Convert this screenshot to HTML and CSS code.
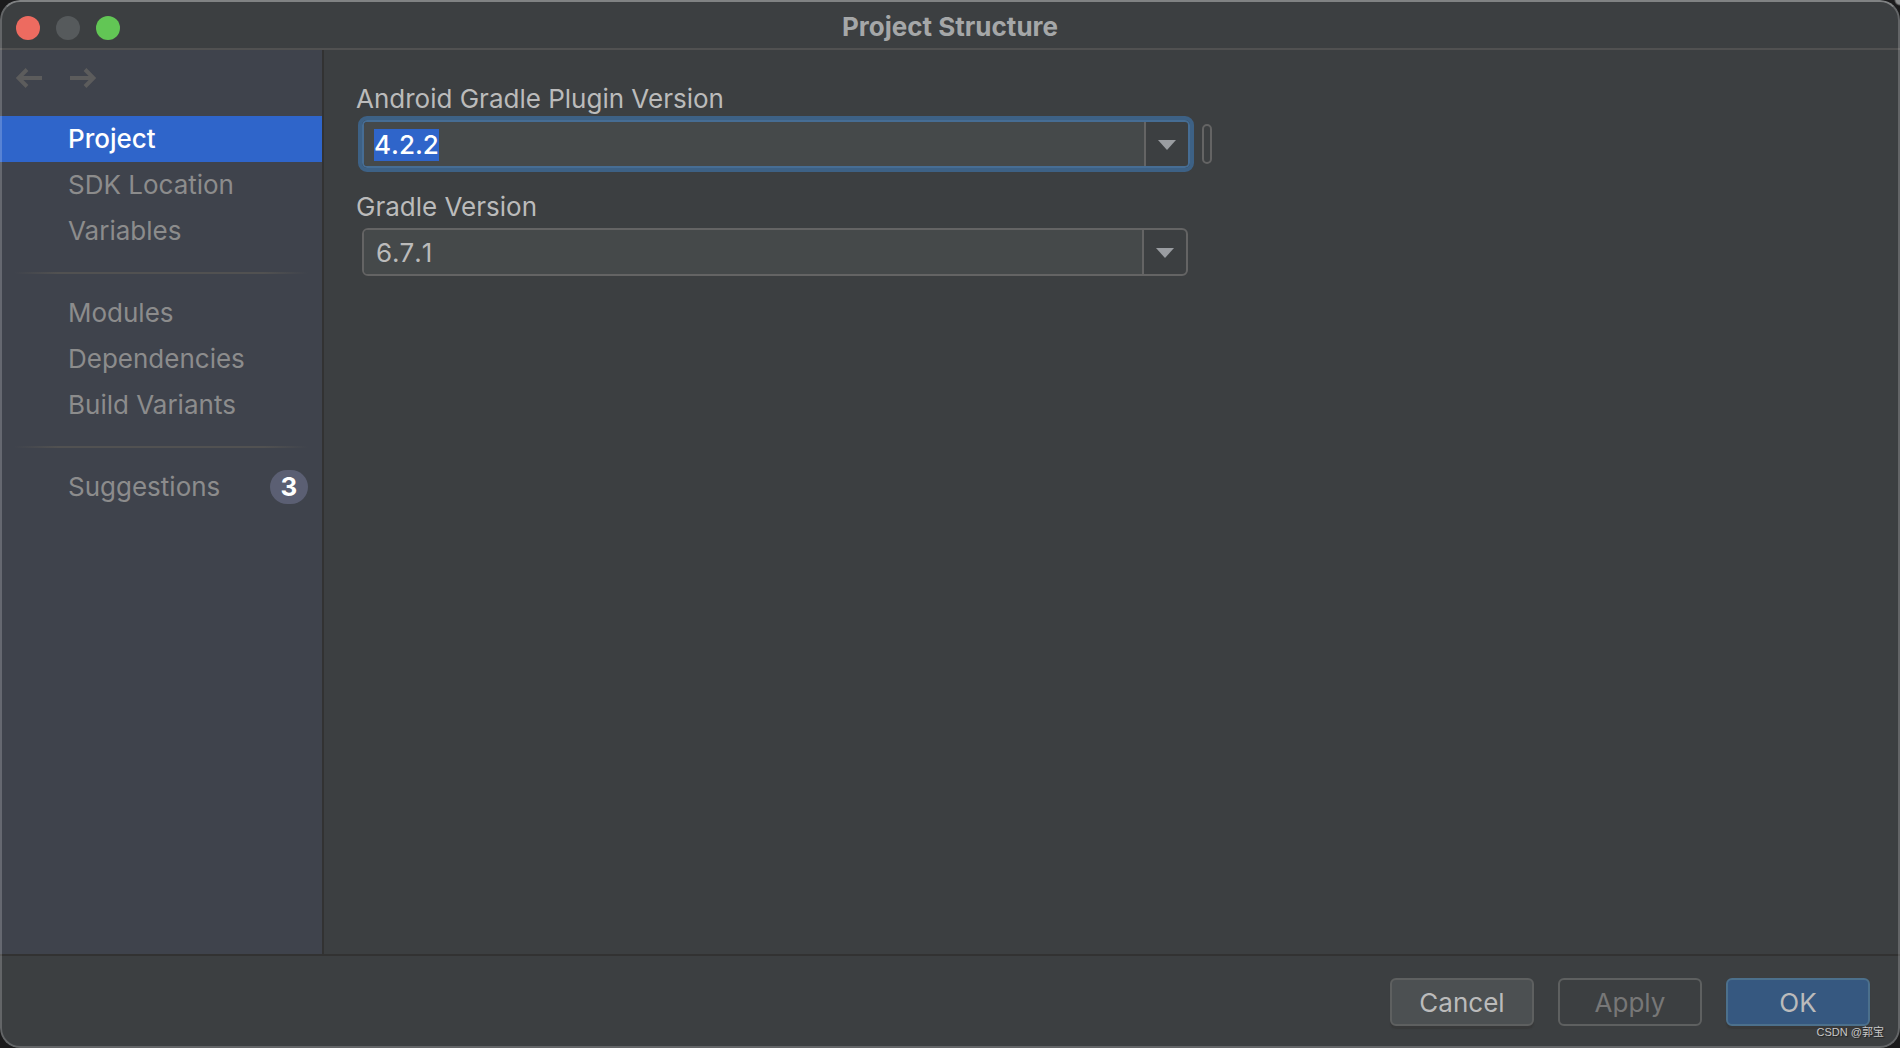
FILE: index.html
```html
<!DOCTYPE html>
<html lang="en">
<head>
<meta charset="utf-8">
<title>Project Structure</title>
<link rel="stylesheet" href="styles.css">
</head>
<body>
<div class="dialog">
  <header class="titlebar">
    <div class="lights">
      <button type="button" class="light light-close" aria-label="Close"></button>
      <button type="button" class="light light-min" aria-label="Minimize" disabled></button>
      <button type="button" class="light light-zoom" aria-label="Zoom"></button>
    </div>
    <h1 class="title">Project Structure</h1>
  </header>

  <div class="body">
    <aside class="sidebar">
      <div class="history">
        <button type="button" class="history-btn" aria-label="Back" disabled>
          <svg width="26" height="20" viewBox="0 0 26 20"><path d="M26 10H3M11 1.500L2.500 10L11 18.500"/></svg>
        </button>
        <button type="button" class="history-btn" aria-label="Forward" disabled>
          <svg width="26" height="20" viewBox="0 0 26 20"><path d="M0 10H23M15 1.500L23.500 10L15 18.500"/></svg>
        </button>
      </div>
      <nav class="nav">
        <a class="nav-item selected" href="#project" aria-current="page">Project</a>
        <a class="nav-item" href="#sdk">SDK Location</a>
        <a class="nav-item" href="#variables">Variables</a>
        <hr class="nav-line">
        <a class="nav-item" href="#modules">Modules</a>
        <a class="nav-item" href="#dependencies">Dependencies</a>
        <a class="nav-item" href="#variants">Build Variants</a>
        <hr class="nav-line">
        <a class="nav-item" href="#suggestions">Suggestions <span class="count">3</span></a>
      </nav>
    </aside>

    <main class="content">
      <label class="label" for="agp">Android Gradle Plugin Version</label>
      <div class="row">
        <div class="combo combo-focus">
          <input class="combo-input" id="agp" type="text" value="4.2.2" spellcheck="false">
          <button type="button" class="combo-btn" aria-label="Show plugin versions">
            <svg width="18" height="10" viewBox="0 0 18 10"><path d="M0 0H18L9 10Z"/></svg>
          </button>
        </div>
        <div class="grip"></div>
      </div>
      <label class="label label-next" for="gradle">Gradle Version</label>
      <div class="row">
        <div class="combo">
          <input class="combo-input" id="gradle" type="text" value="6.7.1" spellcheck="false">
          <button type="button" class="combo-btn" aria-label="Show Gradle versions">
            <svg width="18" height="10" viewBox="0 0 18 10"><path d="M0 0H18L9 10Z"/></svg>
          </button>
        </div>
      </div>
    </main>
  </div>

  <footer class="footer">
    <button type="button" class="btn">Cancel</button>
    <button type="button" class="btn btn-disabled" disabled>Apply</button>
    <button type="button" class="btn btn-primary">OK</button>
  </footer>
</div>
<div class="watermark">CSDN @郭宝</div>
<script src="main.js"></script>
</body>
</html>
```
FILE: styles.css
```css
* {
  box-sizing: border-box;
}

body {
  margin: 0;
  background: radial-gradient(circle at 100% 0, #8c8e8f 0 4px, #1b1b1c 6px);
  font-family: Inter, "Noto Sans CJK SC", sans-serif;
  font-size: 26px;
  line-height: 32px;
  color: #bbbbbb;
}

button,
input {
  font: inherit;
  color: inherit;
}

.dialog {
  position: relative;
  display: flex;
  flex-direction: column;
  min-height: 100vh;
  border-radius: 20px;
  overflow: hidden;
  background: #3c3f41;
}

/* translucent rim drawn over the window's contents */
.dialog::after {
  content: "";
  position: absolute;
  inset: 0;
  border: 2px solid rgba(255, 255, 255, 0.2);
  border-top-color: rgba(255, 255, 255, 0.35);
  border-radius: 20px;
  pointer-events: none;
}

.titlebar {
  display: grid;
  grid-template-columns: 1fr auto 1fr;
  align-items: center;
  height: 50px;
  padding: 6px 16px 0;
  border-bottom: 2px solid #515151;
}

.lights {
  display: flex;
  gap: 16px;
  padding-top: 2px;
}

.light {
  width: 24px;
  height: 24px;
  padding: 0;
  border: 0;
  border-radius: 50%;
}

.light-close {
  background: #ed6b60;
}

.light-min {
  background: #565a5c;
}

.light-zoom {
  background: #62c655;
}

.title {
  margin: 0;
  font-size: 26px;
  line-height: 32px;
  font-weight: 700;
  color: #a5a7a8;
}

.body {
  display: flex;
  flex: 1;
}

.sidebar {
  flex: none;
  width: 324px;
  border-right: 2px solid #323232;
  background: #3f434c;
}

.history {
  display: flex;
  gap: 28px;
  height: 66px;
  padding: 18px 16px;
}

.history-btn {
  display: flex;
  width: 26px;
  height: 20px;
  padding: 0;
  border: 0;
  background: none;
}

.history-btn path {
  fill: none;
  stroke: #5c5c5c;
  stroke-width: 4;
}

.nav-item {
  display: flex;
  align-items: center;
  justify-content: space-between;
  height: 46px;
  padding: 0 14px 0 68px;
  color: #8c8c8c;
  text-decoration: none;
}

.nav-item.selected {
  background: #2f65ca;
  color: #ffffff;
  font-weight: 500;
}

.nav-line {
  height: 2px;
  margin: 18px 14px 16px;
  border: 0;
  background: linear-gradient(90deg, transparent, #515151 15%, #515151 85%, transparent);
}

.count {
  width: 38px;
  height: 34px;
  border-radius: 17px;
  background: #5b5f73;
  color: #ffffff;
  font-weight: 700;
  line-height: 34px;
  text-align: center;
}

.content {
  flex: 1;
  padding: 33px 32px;
}

.label {
  display: block;
  padding-bottom: 1px;
}

.label-next {
  padding-top: 19px;
  padding-bottom: 5px;
}

.row {
  display: flex;
  align-items: center;
  gap: 8px;
}

.combo {
  display: flex;
  width: 826px;
  height: 48px;
  margin-left: 6px;
  border: 2px solid #646464;
  border-radius: 6px;
  overflow: hidden;
}

.combo-focus {
  width: 836px;
  height: 56px;
  margin-left: 2px;
  border: 4px solid #3d6185;
  border-radius: 9px;
  box-shadow: inset 0 0 0 2px #466d94;
  padding: 2px;
}

.combo-input {
  flex: 1;
  min-width: 0;
  padding: 1px 12px 0;
  border: 0;
  outline: 0;
  background: #45494a;
  font-kerning: none;
  line-height: 32px;
}

.combo-focus .combo-input {
  padding: 1px 10px 0;
  border-radius: 4px 0 0 4px;
  font-weight: 500;
}

.combo-input::selection {
  background: #2f65ca;
  color: #ffffff;
}

.combo-btn {
  display: flex;
  align-items: center;
  justify-content: center;
  width: 44px;
  padding: 1px 0 0;
  border: 0;
  border-left: 2px solid #646464;
  background: none;
}

.combo-btn path {
  fill: #9a9da1;
}

.grip {
  width: 10px;
  height: 40px;
  border: 2px solid #646464;
  border-radius: 5px;
}

.footer {
  display: flex;
  justify-content: flex-end;
  gap: 24px;
  padding: 22px 30px;
  border-top: 2px solid #323232;
}

.btn {
  width: 144px;
  height: 48px;
  padding: 2px 0 0;
  border: 2px solid #5e6060;
  border-radius: 6px;
  background: #4c5052;
  box-shadow: 0 3px 1px rgba(54, 54, 54, 0.6);
}

.btn-disabled {
  background: none;
  color: #777777;
  box-shadow: none;
}

.btn-primary {
  border-color: #4c708c;
  background: #365880;
}

.watermark {
  position: absolute;
  right: 16px;
  bottom: 7px;
  font-family: "Liberation Sans", "Noto Sans CJK SC", sans-serif;
  font-size: 11px;
  line-height: 18px;
  color: #c8c8c8;
  text-shadow: 1px 1px 1px #222222;
}
```
FILE: main.js
```js
const field = document.getElementById("agp");
field.focus();
field.select();
```
